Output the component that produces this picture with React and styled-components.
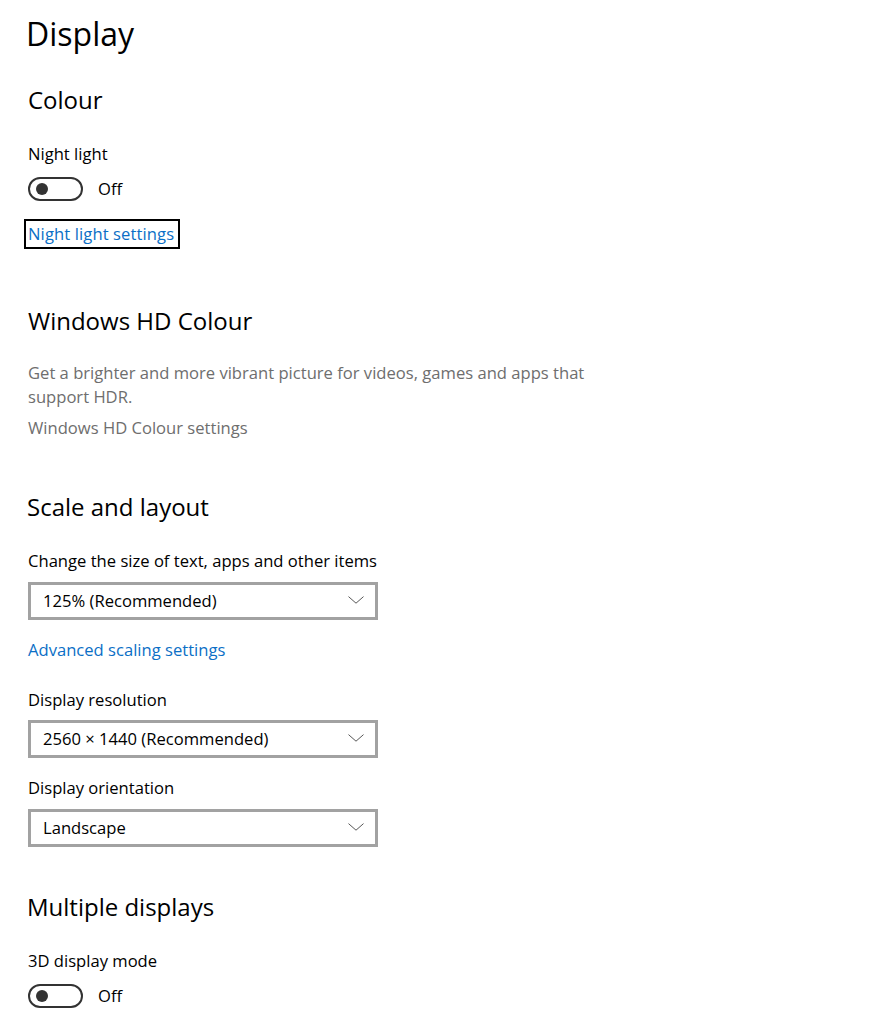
import React from "react";
import styled, { createGlobalStyle } from "styled-components";

const Global = createGlobalStyle`
  html, body { margin: 0; padding: 0; background: #ffffff; }
  body { font-family: "Open Sans", "Noto Sans", sans-serif; color: #000; -webkit-font-smoothing: antialiased; }
`;

const Page = styled.main`
  display: flex;
  flex-direction: column;
  align-items: flex-start;
  padding: 12px 0 0 28px;
`;

const Title = styled.h1`
  margin: 0 0 0 -2px;
  font-size: 32px;
  font-weight: 400;
  line-height: 44px;
  color: #000;
`;

const SectionHeading = styled.h2`
  margin: ${(p) => p.$mt}px 0 0 ${(p) => p.$ml || 0}px;
  font-size: 24px;
  font-weight: 400;
  line-height: 34px;
  color: #000;
`;

const Label = styled.div`
  margin-top: ${(p) => p.$mt}px;
  font-size: 16.6px;
  line-height: 24px;
  color: #000;
`;

const ToggleRow = styled.div`
  margin-top: ${(p) => p.$mt}px;
  display: flex;
  align-items: center;
  gap: 15px;
`;

const Toggle = styled.div`
  box-sizing: border-box;
  width: 55px;
  height: 24px;
  border: 2px solid #333333;
  border-radius: 12px;
  display: flex;
  align-items: center;
  padding-left: 6px;
`;

const Knob = styled.span`
  width: 12px;
  height: 12px;
  border-radius: 50%;
  background: #333333;
`;

const ToggleText = styled.span`
  font-size: 16.6px;
  line-height: 24px;
  color: #000;
`;

const FocusLink = styled.a`
  margin: ${(p) => p.$mt}px 0 0 -4px;
  border: 2px solid #000;
  padding: 0 4px 0 2px;
  font-size: 16.6px;
  line-height: 26px;
  letter-spacing: 0.1px;
  color: #0b6fc6;
  text-decoration: none;
  cursor: pointer;
`;

const Link = styled.a`
  margin-top: ${(p) => p.$mt}px;
  font-size: 16.6px;
  line-height: 24px;
  color: #0b6fc6;
  text-decoration: none;
  cursor: pointer;
`;

const Description = styled.p`
  margin: ${(p) => p.$mt}px 0 0 0;
  max-width: 600px;
  font-size: 16.6px;
  line-height: 24px;
  color: #6e6e6e;
`;

const DisabledLink = styled.div`
  margin-top: ${(p) => p.$mt}px;
  font-size: 16.6px;
  line-height: 24px;
  color: #6e6e6e;
`;

const Select = styled.div`
  margin-top: ${(p) => p.$mt}px;
  box-sizing: border-box;
  width: 350px;
  height: 38px;
  border: 3px solid #a2a2a2;
  display: flex;
  align-items: center;
  justify-content: space-between;
  padding: 0 11px 0 12px;
`;

const SelectValue = styled.span`
  font-size: 16.6px;
  line-height: 24px;
  color: #000;
`;

const ChevronIcon = styled.svg`
  width: 16px;
  height: 8px;
  margin-top: -2px;
  display: block;
`;

const Chevron = () => (
  <ChevronIcon viewBox="0 0 16 8">
    <path d="M0.5 0.6 L8 7.2 L15.5 0.6" fill="none" stroke="#444" strokeWidth="0.9" />
  </ChevronIcon>
);

const Switch = ({ mt, label }) => (
  <ToggleRow $mt={mt}>
    <Toggle>
      <Knob />
    </Toggle>
    <ToggleText>{label}</ToggleText>
  </ToggleRow>
);

const Dropdown = ({ mt, value }) => (
  <Select $mt={mt}>
    <SelectValue>{value}</SelectValue>
    <Chevron />
  </Select>
);

export default function App() {
  return (
    <>
      <Global />
      <Page>
        <Title>Display</Title>

        <SectionHeading $mt={26.5}>Colour</SectionHeading>
        <Label $mt={25.5}>Night light</Label>
        <Switch mt={11} label="Off" />
        <FocusLink $mt={18}>Night light settings</FocusLink>

        <SectionHeading $mt={55}>Windows HD Colour</SectionHeading>
        <Description $mt={22.5}>
          Get a brighter and more vibrant picture for videos, games and apps that support HDR.
        </Description>
        <DisabledLink $mt={7.5}>Windows HD Colour settings</DisabledLink>

        <SectionHeading $mt={50} $ml={-1}>Scale and layout</SectionHeading>
        <Label $mt={25}>Change the size of text, apps and other items</Label>
        <Dropdown mt={9} value="125% (Recommended)" />
        <Link $mt={18}>Advanced scaling settings</Link>
        <Label $mt={26}>Display resolution</Label>
        <Dropdown mt={8} value="2560 × 1440 (Recommended)" />
        <Label $mt={18}>Display orientation</Label>
        <Dropdown mt={9} value="Landscape" />

        <SectionHeading $mt={43} $ml={-1}>Multiple displays</SectionHeading>
        <Label $mt={24.5}>3D display mode</Label>
        <Switch mt={11} label="Off" />
      </Page>
    </>
  );
}
